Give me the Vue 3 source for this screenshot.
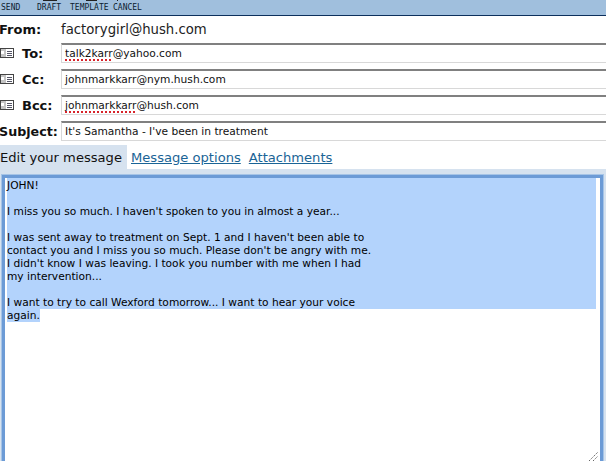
<script setup>
const tools = ['Send', 'Draft', 'Template', 'Cancel'];

const recipients = [
  { label: 'To:', misspelt: 'talk2karr', rest: '@yahoo.com' },
  { label: 'Cc:', misspelt: '', rest: 'johnmarkkarr@nym.hush.com' },
  { label: 'Bcc:', misspelt: 'johnmarkkarr', rest: '@hush.com' },
];

const lines = [
  'JOHN!',
  '',
  "I miss you so much. I haven't spoken to you in almost a year...",
  '',
  "I was sent away to treatment on Sept. 1 and I haven't been able to",
  "contact you and I miss you so much. Please don't be angry with me.",
  "I didn't know I was leaving. I took you number with me when I had",
  'my intervention...',
  '',
  'I want to try to call Wexford tomorrow... I want to hear your voice',
];
</script>

<template>
  <div class="page">
    <div class="toolbar">
      <div v-for="tool in tools" :key="tool" class="tool" :class="'tool-' + tool.toLowerCase()">
        <span class="tool-icon"></span>
        <span class="tool-label">{{ tool }}</span>
      </div>
    </div>

    <div class="headers">
      <div class="from">
        <span class="from-label">From:</span>
        <span class="from-value">factorygirl@hush.com</span>
      </div>

      <div v-for="r in recipients" :key="r.label" class="row">
        <svg class="card" width="14" height="10" viewBox="0 0 14 10">
          <rect x="0.5" y="0.5" width="13" height="9" fill="#fff" stroke="#444" />
          <rect x="1" y="1" width="5" height="8" fill="#c4c4c4" />
          <rect x="1" y="3" width="3" height="3" fill="#fff" />
          <path d="M7 3.5h5M7 5.5h5M7 7.5h5" stroke="#556" fill="none" />
        </svg>
        <span class="row-label">{{ r.label }}</span>
        <div class="field">
          <span v-if="r.misspelt" class="misspelt">{{ r.misspelt }}</span>{{ r.rest }}
        </div>
      </div>

      <div class="subject">
        <span class="subject-label">Subject:</span>
        <div class="field">It's Samantha - I've been in treatment</div>
      </div>
    </div>

    <div class="tabs">
      <span class="tab active">Edit your message</span>
      <a class="tab link">Message options</a>
      <a class="tab link">Attachments</a>
    </div>

    <div class="panel">
      <div class="editor">
        <div class="selected">
          <div v-for="(line, i) in lines" :key="i" class="line">{{ line }}</div>
        </div>
        <div class="line last"><span class="selected-end">again.</span></div>
        <svg class="grip" width="10" height="10" viewBox="0 0 10 10">
          <path d="M1 10L10 1M5 10L10 5" stroke="#666" stroke-dasharray="1.4 1" fill="none" />
        </svg>
      </div>
    </div>
  </div>
</template>

<style scoped>
.page {
  width: 606px;
  height: 461px;
  overflow: hidden;
  display: flex;
  flex-direction: column;
  background: #fff;
  color: #111;
  font-family: "DejaVu Sans", sans-serif;
}
.toolbar {
  height: 15px;
  flex: none;
  display: flex;
  background: #a0bfdd;
  border-bottom: 1px solid #0c2f5c;
}
.tool {
  position: relative;
  height: 15px;
  display: flex;
  align-items: flex-end;
  padding-bottom: 3px;
  box-sizing: border-box;
}
.tool-send { width: 36px; margin-left: 1px; }
.tool-draft { width: 33px; }
.tool-template { width: 43px; }
.tool-cancel { width: 40px; }
.tool-label {
  font-family: "DejaVu Sans Mono", monospace;
  font-size: 8px;
  line-height: 8px;
  text-transform: uppercase;
  color: #0c1c30;
  white-space: nowrap;
}
.tool-icon {
  position: absolute;
  top: 0;
  height: 1px;
  background: #222;
}
.tool-draft .tool-icon { left: 6px; width: 14px; }
.tool-template .tool-icon { left: 16px; width: 11px; }
.tool-cancel .tool-icon { left: 4px; width: 1px; }

.headers {
  flex: none;
  display: flex;
  flex-direction: column;
  padding-top: 6px;
}
.from {
  height: 15px;
  display: flex;
  align-items: center;
}
.from-label {
  width: 62px;
  margin-left: -1px;
  font-size: 13px;
  font-weight: 700;
}
.from-value {
  font-size: 13.25px;
  color: #222;
}
.row {
  height: 20px;
  margin-top: 6px;
  display: flex;
  align-items: center;
}
.card {
  flex: none;
  margin-right: 8px;
}
.row-label {
  width: 39px;
  font-size: 13px;
  font-weight: 700;
}
.field {
  flex: 1;
  height: 20px;
  box-sizing: border-box;
  border: 1px solid #d8d8d8;
  border-top: 2px solid #808080;
  border-right: none;
  padding-left: 3px;
  font-size: 10.65px;
  line-height: 17px;
  color: #111;
  white-space: nowrap;
}
.misspelt {
  text-decoration: underline dotted #d8232a 2px;
  text-underline-offset: 2px;
}
.subject {
  height: 20px;
  margin-top: 6px;
  display: flex;
  align-items: center;
}
.subject-label {
  width: 62px;
  margin-left: -1px;
  font-size: 12.7px;
  font-weight: 700;
}
.tabs {
  flex: none;
  height: 24px;
  margin-top: 4px;
  display: flex;
  align-items: stretch;
  font-size: 13.1px;
}
.tab {
  display: flex;
  align-items: center;
  white-space: nowrap;
}
.tab.active {
  width: 127px;
  background: #d6e2ef;
}
.tab.link {
  margin-left: 4px;
  margin-right: 4px;
  color: #1a6496;
  text-decoration: underline;
}
.panel {
  flex: 1;
  min-height: 0;
  background: #d6e2ef;
  padding: 6px 3px 0 2px;
}
.editor {
  position: relative;
  height: 100%;
  box-sizing: border-box;
  border: 3px solid #6c9bd6;
  border-bottom: none;
  outline: 1px solid #a6c4e6;
  background: #fff;
  font-size: 10.65px;
  line-height: 13px;
  color: #000;
}
.selected {
  background: #b3d3fc;
  padding-top: 1px;
  margin-left: 2px;
  margin-right: 4px;
}
.line {
  min-height: 13px;
  white-space: pre;
}
.last { margin-left: 2px; }
.selected-end { background: #b3d3fc; display: inline-block; }
.grip {
  position: absolute;
  right: 2px;
  bottom: 0;
}
</style>

<style>
html, body { background: #fff; }
</style>
